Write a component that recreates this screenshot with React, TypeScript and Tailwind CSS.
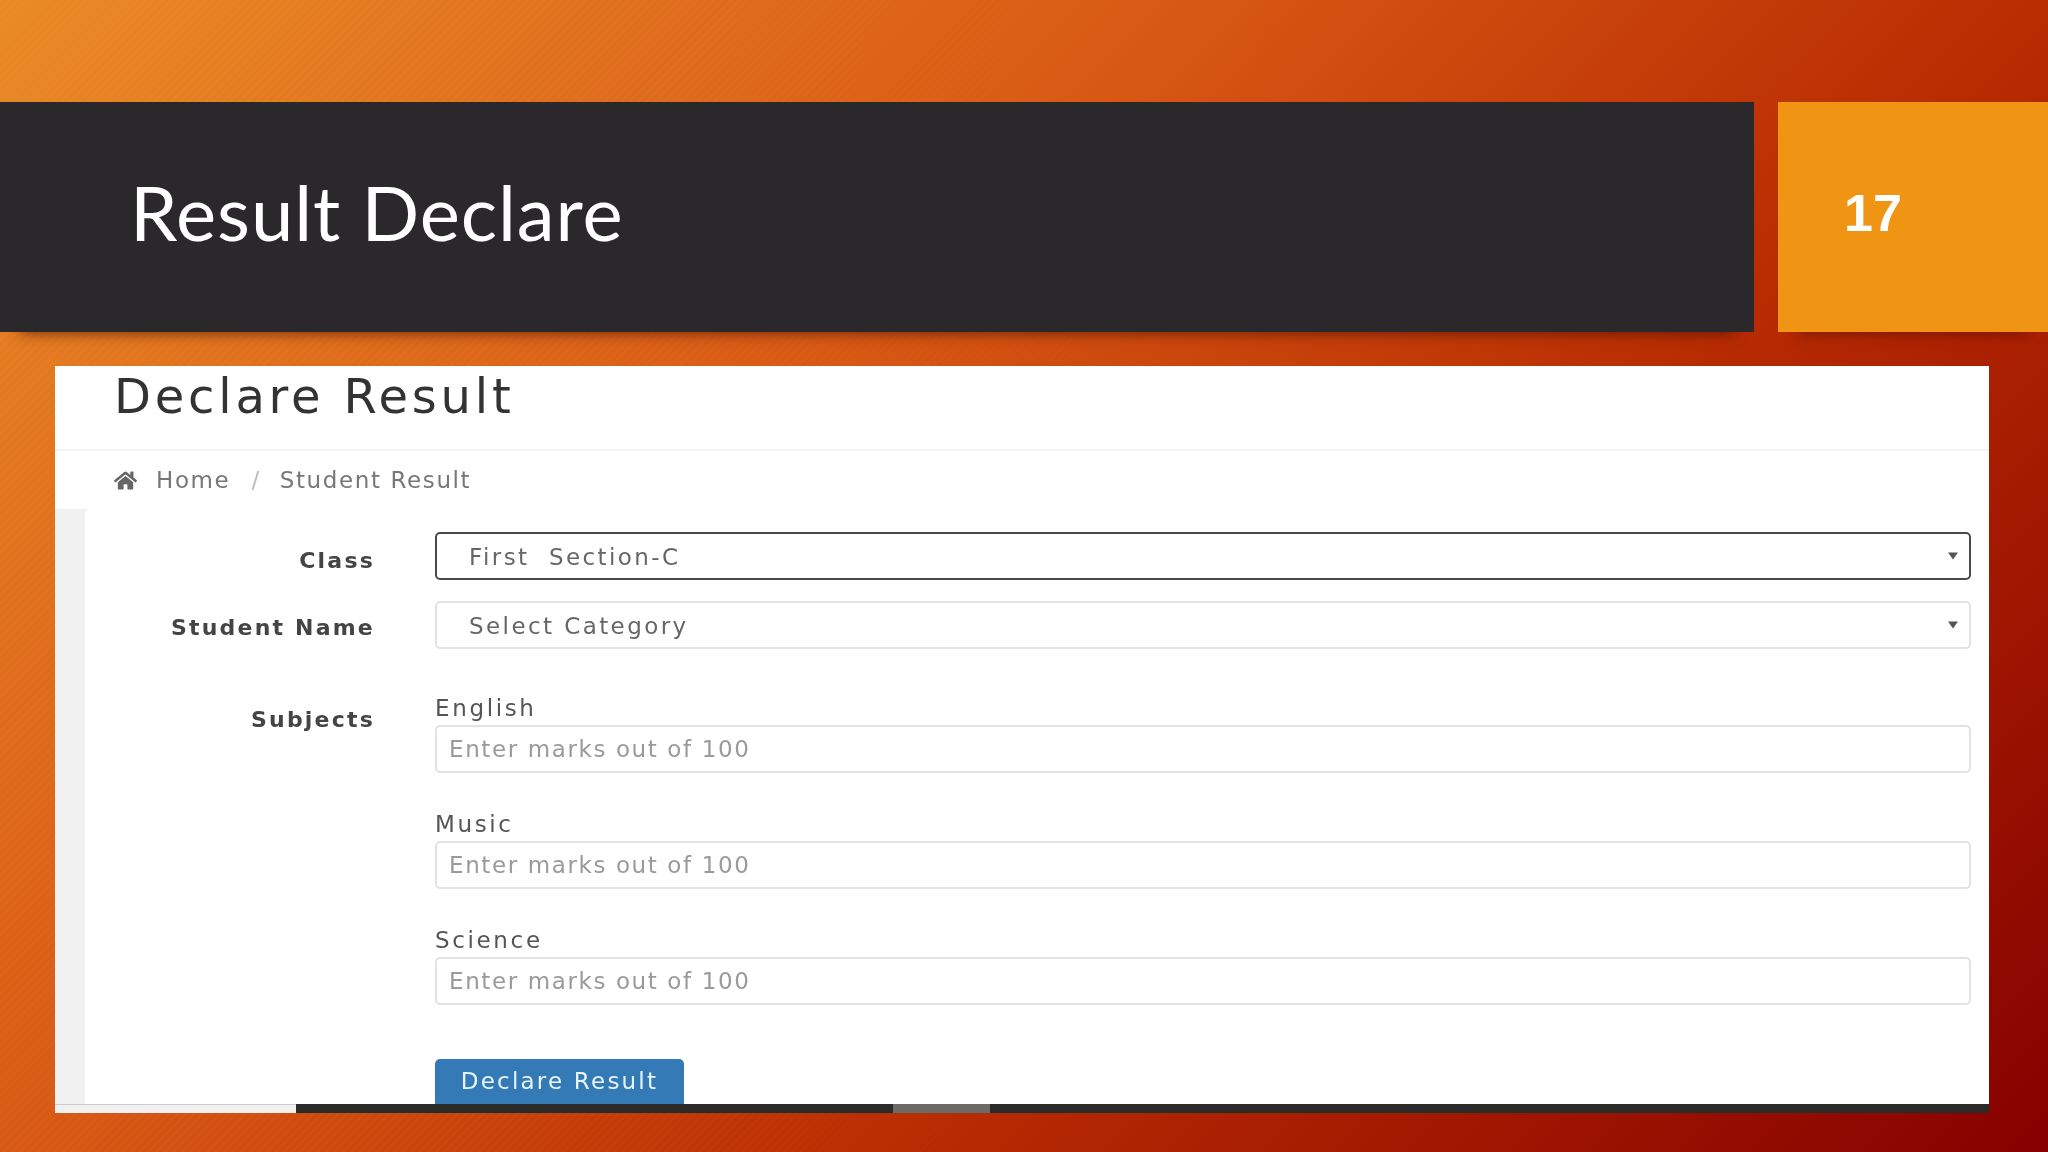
import React from 'react';
import { FaHome } from 'react-icons/fa';

const poppins = "font-['DejaVu_Sans','Liberation_Sans',sans-serif]";

function Caret() {
  return (
    <svg className="absolute right-[12px] top-[20px] w-[12px] h-[8px] pointer-events-none" viewBox="0 0 12 8">
      <path d="M1 0.5h10L6 7.5z" fill="#555" />
    </svg>
  );
}

function SelectField({ value, focused }: { value: string; focused?: boolean }) {
  return (
    <div className="relative">
      <select
        defaultValue={value}
        className={`block w-full h-[48px] appearance-none rounded-[5px] bg-white pl-[32px] pt-[2px] text-[23px] tracking-[0.105em] text-[#666] outline-none ${poppins} ${focused ? 'border-2 border-[#4a4a4a]' : 'border-2 border-[#e2e2e2]'}`}
      >
        <option>{value}</option>
      </select>
      <Caret />
    </div>
  );
}

function MarksField({ label }: { label: string }) {
  return (
    <div>
      <div className={`h-[31px] text-[23px] leading-[28px] tracking-[0.115em] text-[#555] ${poppins}`}>{label}</div>
      <input
        placeholder="Enter marks out of 100"
        className={`block w-full h-[48px] rounded-[5px] border-2 border-[#e2e2e2] bg-white px-[12px] text-[23px] tracking-[0.07em] placeholder:text-[#9a9a9a] outline-none ${poppins}`}
      />
    </div>
  );
}

const labelClass = `w-[290px] text-right text-[22px] leading-[31px] font-bold tracking-[0.1em] text-[#444] ${poppins}`;

export default function App() {
  return (
    <div className="relative w-[2048px] h-[1152px] overflow-hidden pt-[102px] bg-[linear-gradient(135deg,#ea8a26_0%,#d95a14_36%,#b82c02_64%,#860000_100%)]">
      {/* diagonal hatch of the slide theme */}
      <div className="absolute inset-0 bg-[repeating-linear-gradient(135deg,rgba(255,255,255,0.025)_0px,rgba(255,255,255,0.025)_2px,transparent_2px,transparent_6px)] [mask-image:linear-gradient(100deg,black_0%,black_30%,transparent_65%)]" />

      <header className="relative flex gap-[24px] h-[230px]">
        <div className="w-[1754px] flex items-center pl-[130px] bg-[#2a282b] shadow-[0_20px_14px_-20px_rgba(70,15,0,0.8)]">
          <h1 className="text-white text-[76px] tracking-[0.012em] font-['Lato',sans-serif] -mt-[10px]">Result Declare</h1>
        </div>
        <div className="flex-1 flex items-center pl-[66px] bg-[#f09414] shadow-[0_20px_14px_-20px_rgba(90,15,0,0.8)]">
          <span className="text-white text-[52px] font-bold font-['Liberation_Sans',sans-serif] -mt-[8px]">17</span>
        </div>
      </header>

      <main className="relative mt-[34px] ml-[55px] w-[1934px] h-[747px] flex flex-col bg-white overflow-hidden blur-[0.5px]">
        <div className="h-[85px] shrink-0 pl-[59px] pt-[2px] border-b-2 border-[#f5f5f5]">
          <h2 className={`text-[48px] leading-[56px] tracking-[0.079em] text-[#333] ${poppins}`}>Declare Result</h2>
        </div>
        <div className={`h-[58px] shrink-0 flex items-center pl-[59px] text-[23px] tracking-[0.07em] text-[#777] ${poppins}`}>
          <FaHome className="w-[23px] h-[23px] text-[#666]" />
          <span className="ml-[19px]">Home</span>
          <span className="ml-[21px] text-[#bbb]">/</span>
          <span className="ml-[19px]">Student Result</span>
        </div>

        <div className="flex-1 min-h-0 flex bg-[#f2f1f1]">
          <div className="flex-1 min-w-0 ml-[30px] rounded-tl-[5px] bg-white pt-[23px] flex flex-col">
            <div className="flex shrink-0 h-[69px]">
              <div className={`${labelClass} pt-[13px]`}>Class</div>
              <div className="ml-[60px] w-[1536px]"><SelectField value={'First\u00a0 Section-C'} focused /></div>
            </div>
            <div className="flex shrink-0 h-[77px]">
              <div className={`${labelClass} pt-[11px]`}>Student Name</div>
              <div className="ml-[60px] w-[1536px]"><SelectField value="Select Category" /></div>
            </div>
            <div className="flex shrink-0">
              <div className={`${labelClass} pt-[26px]`}>Subjects</div>
              <div className="ml-[60px] w-[1536px] pt-[16px] flex flex-col gap-[37px]">
                <MarksField label="English" />
                <MarksField label="Music" />
                <MarksField label="Science" />
              </div>
            </div>
            <div className="shrink-0 ml-[350px] mt-[54px]">
              <button className={`w-[249px] h-[60px] rounded-[5px] bg-[#337ab7] text-[23px] tracking-[0.096em] text-[#e8f4fb] pb-[15px] ${poppins}`}>Declare Result</button>
            </div>
          </div>
        </div>

        {/* horizontal scrollbar of the captured page */}
        <div className="absolute left-0 right-0 bottom-0 h-[9px] flex bg-[#2a2a28]">
          <div className="w-[241px] bg-[#f1f0f0] border-t border-[#ccc]" />
          <div className="w-[597px]" />
          <div className="w-[97px] bg-[#6b6a66]" />
        </div>
      </main>
    </div>
  );
}
